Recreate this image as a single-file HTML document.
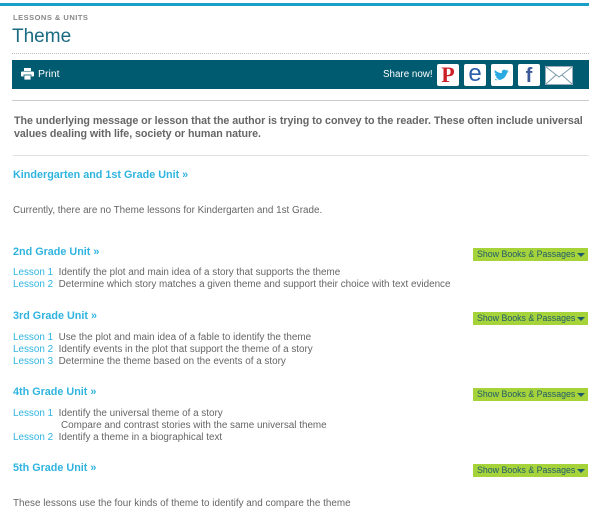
<!DOCTYPE html>
<html><head><meta charset="utf-8"><style>
*{margin:0;padding:0;box-sizing:border-box}
body{width:600px;height:502px;overflow:hidden;background:#fff;font-family:"Liberation Sans",Arial,sans-serif;position:relative}
.a{position:absolute;white-space:nowrap}
.lk{color:#2fb4e0;font-weight:bold;font-size:10.8px}
.t{color:#666;font-size:9.9px}
.l{color:#2fb4e0}
.btn{position:absolute;left:473px;width:115px;height:13px;background:#a6d33a;color:#1f5a6a;font-size:8.8px;line-height:13px;padding-left:4px}
.btn:after{content:"";position:absolute;right:3px;top:5px;border-left:4px solid transparent;border-right:4px solid transparent;border-top:4px solid #1f5a6a}
.ic{position:absolute;top:64px;width:22px;height:22px;background:#fff;border-radius:2px}
</style></head><body>
<div class="a" style="left:0;top:3px;width:589px;height:3px;background:#1aa0c8"></div>
<div class="a" style="left:13px;top:13px;font-size:7.5px;font-weight:bold;color:#888;letter-spacing:0.5px">LESSONS &amp; UNITS</div>
<div class="a" style="left:12px;top:26px;font-size:19px;color:#1a6a82">Theme</div>
<div class="a" style="left:12px;top:53px;width:577px;border-top:1px dotted #bbb"></div>
<div class="a" style="left:12px;top:60px;width:577px;height:29px;background:#005a70"></div>
<svg class="a" style="left:21px;top:68px" width="13" height="12" viewBox="0 0 13 12"><rect x="3" y="0" width="7" height="3" fill="#fff"/><rect x="0" y="3.5" width="13" height="5" rx="1" fill="#fff"/><rect x="3" y="7" width="7" height="5" fill="#fff" stroke="#005a70" stroke-width="0.8"/></svg>
<div class="a" style="left:38px;top:68px;font-size:10.5px;color:#fff">Print</div>
<div class="a" style="left:383px;top:69px;font-size:9.8px;color:#fff">Share now!</div>
<div class="ic" style="left:437px;color:#cb2027;font-size:22px;font-weight:bold;text-align:center;line-height:22px;font-family:'Liberation Serif',serif">P</div>
<div class="ic" style="left:464px;color:#2b5ea8;font-size:24px;text-align:center;line-height:20px">e</div>
<div class="ic" style="left:491px"><svg width="22" height="22" viewBox="0 0 22 22"><path d="M4 15c4 2 10 1 12-6l2-2-2 .5 1-2-2 1c-2-2-5 0-4 2.5-3 0-5-1-7-3-1 2 0 3 1 4h-1c0 1.5 1 2.5 2 3h-1c.5 1 1.5 2 3 2-1 1-2.5 1.5-4 1z" fill="#2ba9e1"/></svg></div>
<div class="ic" style="left:518px;color:#3b5998;font-size:20px;font-weight:bold;text-align:center;line-height:24px">f</div>
<svg class="a" style="left:545px;top:66px" width="28" height="19" viewBox="0 0 28 19"><rect x="0.5" y="0.5" width="27" height="18" fill="#fff" stroke="#9ab" /><path d="M1 1l13 10L27 1M1 18l10-9M27 18l-10-9" stroke="#7a9aa8" fill="none"/></svg>
<div class="a" style="left:12px;top:100px;width:577px;border-top:1px solid #ccc"></div>
<div class="a" style="left:14px;top:115px;font-size:10.7px;font-weight:bold;color:#666;line-height:13px;letter-spacing:-0.05px">The underlying message or lesson that the author is trying to convey to the reader. These often include universal<br>values dealing with life, society or human nature.</div>
<div class="a" style="left:13px;top:155px;width:576px;border-top:1px solid #e2e2e2"></div>
<div class="a lk" style="left:13px;top:169px">Kindergarten and 1st Grade Unit »</div>
<div class="a t" style="left:13px;top:205px">Currently, there are no Theme lessons for Kindergarten and 1st Grade.</div>

<div class="a lk" style="left:13px;top:246px">2nd Grade Unit »</div>
<div class="btn" style="top:248px">Show Books &amp; Passages</div>
<div class="a t" style="left:13px;top:267px;line-height:12.2px"><span class="l">Lesson 1</span>&nbsp; Identify the plot and main idea of a story that supports the theme<br><span class="l">Lesson 2</span>&nbsp; Determine which story matches a given theme and support their choice with text evidence</div>

<div class="a lk" style="left:13px;top:310px">3rd Grade Unit »</div>
<div class="btn" style="top:312px">Show Books &amp; Passages</div>
<div class="a t" style="left:13px;top:332px;line-height:12.2px"><span class="l">Lesson 1</span>&nbsp; Use the plot and main idea of a fable to identify the theme<br><span class="l">Lesson 2</span>&nbsp; Identify events in the plot that support the theme of a story<br><span class="l">Lesson 3</span>&nbsp; Determine the theme based on the events of a story</div>

<div class="a lk" style="left:13px;top:386px">4th Grade Unit »</div>
<div class="btn" style="top:388px">Show Books &amp; Passages</div>
<div class="a t" style="left:13px;top:408px;line-height:12.2px"><span class="l">Lesson 1</span>&nbsp; Identify the universal theme of a story<br><span style="padding-left:48px">Compare and contrast stories with the same universal theme</span><br><span class="l">Lesson 2</span>&nbsp; Identify a theme in a biographical text</div>

<div class="a lk" style="left:13px;top:462px">5th Grade Unit »</div>
<div class="btn" style="top:464px">Show Books &amp; Passages</div>
<div class="a t" style="left:13px;top:498px">These lessons use the four kinds of theme to identify and compare the theme</div>
</body></html>
